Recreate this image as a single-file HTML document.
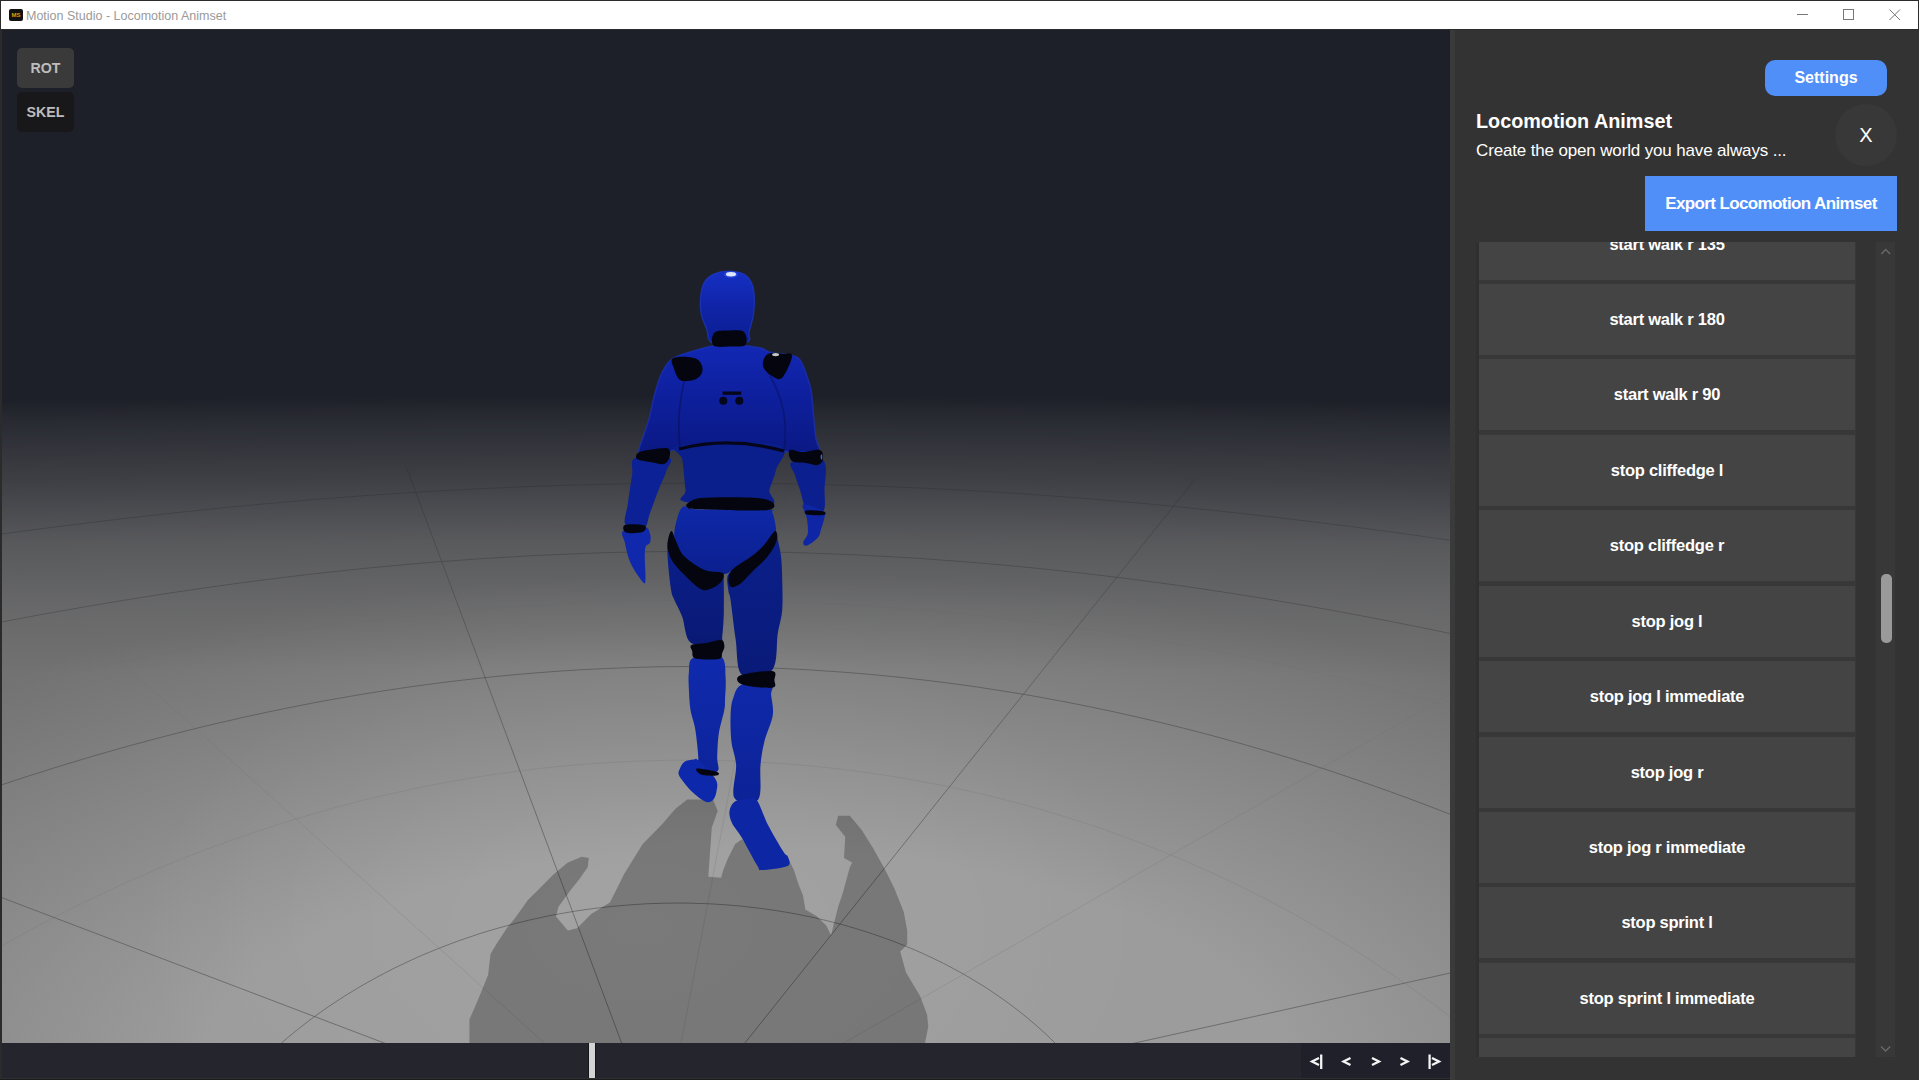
<!DOCTYPE html>
<html><head><meta charset="utf-8">
<style>
*{margin:0;padding:0;box-sizing:border-box}
html,body{width:1919px;height:1080px;overflow:hidden;background:#2b2b2b;font-family:"Liberation Sans",sans-serif}
.abs{position:absolute}
#title{left:1px;top:1px;width:1917px;height:28px;background:#fff}
#ttxt{left:26px;top:9px;font-size:12.5px;color:#9a9a9a;white-space:nowrap}
#ico{left:9px;top:9px;width:14px;height:12px;background:#111;border-radius:2px;color:#d9a400;font-size:6px;font-weight:bold;text-align:center;line-height:12px}
#scene{left:2px;top:30px;width:1448px;height:1013px;background:#1e2029;overflow:hidden}
#panel{left:1450px;top:30px;width:469px;height:1050px;background:#333}
#pstrip{left:1450px;top:30px;width:5px;height:1050px;background:#3b3a3b}
#tl{left:2px;top:1043px;width:1448px;height:35px;background:#25262d}
#tlc{left:1301px;top:1043px;width:149px;height:35px;background:#1f2029}
#ph{left:588px;top:1043px;width:8px;height:35px;background:#d4d4d4;border-left:1px solid #15161b;border-right:1px solid #15161b}
#bline{left:2px;top:1078px;width:1448px;height:1px;background:#2e2f33}
#bline2{left:0px;top:1079px;width:1450px;height:1px;background:#1c1c1c}
#list{left:1476px;top:242px;width:380px;height:815px;overflow:hidden;background:#383838}
.item{position:absolute;left:3px;width:376px;height:71px;background:#444;color:#fff;font-weight:bold;font-size:16.5px;text-align:center;line-height:71px;white-space:nowrap;letter-spacing:-0.25px}
#track{left:1876px;top:242px;width:19px;height:815px;background:#383838}
#thumb{left:1881px;top:574px;width:10.5px;height:69px;background:#9a9a9a;border-radius:5px}
.btn{position:absolute;color:#fff;font-weight:bold;text-align:center;white-space:nowrap}
#settings{left:1765px;top:60px;width:122px;height:36px;background:#4f8ff7;border-radius:10px;font-size:16px;line-height:36px}
#export{left:1645px;top:176px;width:252px;height:55px;background:#4f8ff7;font-size:17px;line-height:55px;letter-spacing:-0.62px}
#ptitle{left:1476px;top:110px;font-size:19.8px;font-weight:bold;color:#fff;white-space:nowrap}
#psub{left:1476px;top:141px;font-size:17px;letter-spacing:-0.15px;color:#fff;white-space:nowrap}
#xc{left:1835px;top:104px;width:62px;height:62px;border-radius:50%;background:#383838;color:#fff;font-size:20px;text-align:center;line-height:62px}
.vbtn{position:absolute;left:17px;width:57px;height:40px;border-radius:5px;font-size:14.2px;font-weight:bold;color:#bdbdbd;text-align:center;line-height:40px}
.tc{position:absolute;top:1050px;color:#fff;font-size:17px;font-weight:bold}
</style></head><body>
<div id="title" class="abs"></div>
<div id="ico" class="abs">MS</div>
<div id="ttxt" class="abs">Motion Studio - Locomotion Animset</div>
<svg class="abs" style="left:1780px;top:0px" width="139" height="29" viewBox="1780 0 139 29">
<line x1="1797" y1="14.5" x2="1808" y2="14.5" stroke="#777" stroke-width="1"/>
<rect x="1843.5" y="9.5" width="10" height="10" fill="none" stroke="#777" stroke-width="1"/>
<path d="M1889.5 9.5 L1900 20 M1900 9.5 L1889.5 20" stroke="#777" stroke-width="1"/>
</svg>
<svg class="abs" style="left:2px;top:30px" width="1448" height="1013" viewBox="2 30 1448 1013">
<defs>
<radialGradient id="floorg" gradientUnits="userSpaceOnUse" cx="744" cy="1078" r="1211" gradientTransform="translate(744 1078) scale(1 0.418) translate(-744 -1078)">
<stop offset="0" stop-color="#9c9c9c"/>
<stop offset="0.45" stop-color="#9c9c9c"/>
<stop offset="1" stop-color="#727272"/>
</radialGradient>
<linearGradient id="topg" x1="0" y1="0" x2="0" y2="1"><stop offset="0" stop-color="#262730" stop-opacity="1"/><stop offset="1" stop-color="#1e2029" stop-opacity="0"/></linearGradient>
<radialGradient id="spot" gradientUnits="userSpaceOnUse" cx="640" cy="930" r="520" gradientTransform="translate(640 930) scale(1 0.6) translate(-640 -930)">
<stop offset="0" stop-color="#ffffff" stop-opacity="0.07"/>
<stop offset="0.6" stop-color="#ffffff" stop-opacity="0.03"/>
<stop offset="1" stop-color="#ffffff" stop-opacity="0"/>
</radialGradient>
<radialGradient id="fog" gradientUnits="userSpaceOnUse" cx="661" cy="1148" r="800" gradientTransform="translate(661 1148) scale(8 1) translate(-661 -1148)">
<stop offset="0.5" stop-color="#1e2029" stop-opacity="0"/>
<stop offset="0.6" stop-color="#1e2029" stop-opacity="0"/>
<stop offset="0.68" stop-color="#1e2029" stop-opacity="0.12"/>
<stop offset="0.76" stop-color="#1e2029" stop-opacity="0.30"/>
<stop offset="0.84" stop-color="#1e2029" stop-opacity="0.62"/>
<stop offset="0.88" stop-color="#1e2029" stop-opacity="0.75"/>
<stop offset="0.92" stop-color="#1e2029" stop-opacity="0.90"/>
<stop offset="0.94" stop-color="#1e2029" stop-opacity="1"/>
</radialGradient>
<style>
.gd{fill:none;stroke:#4a4a4a;stroke-opacity:0.55;stroke-width:1.1}
.gf{fill:none;stroke:#606060;stroke-opacity:0.3;stroke-width:1}
</style>
</defs>
<rect x="2" y="30" width="1448" height="1013" fill="#1e2029"/>
<rect x="2" y="30" width="1448" height="160" fill="url(#topg)"/>
<rect x="2" y="200" width="1448" height="843" fill="url(#floorg)"/>
<rect x="2" y="200" width="1448" height="843" fill="url(#spot)"/>
<g><path d="M151.1 1298.2 L151.4 1291.0 L151.8 1283.9 L152.4 1276.8 L153.2 1269.7 L154.1 1262.7 L155.2 1255.8 L156.4 1248.9 L157.8 1242.1 L159.4 1235.3 L161.1 1228.6 L162.9 1221.9 L164.9 1215.3 L167.0 1208.8 L169.2 1202.4 L171.6 1196.0 L174.1 1189.7 L176.7 1183.4 L179.4 1177.2 L182.3 1171.1 L185.2 1165.0 L188.3 1159.1 L191.5 1153.2 L194.8 1147.3 L198.1 1141.6 L201.6 1135.9 L205.2 1130.3 L208.9 1124.7 L212.6 1119.3 L216.5 1113.9 L220.4 1108.6 L224.4 1103.3 L228.5 1098.1 L232.6 1093.1 L236.9 1088.0 L241.2 1083.1 L245.6 1078.2 L250.0 1073.4 L254.5 1068.7 L259.1 1064.0 L263.7 1059.5 L268.4 1055.0 L273.2 1050.5 L278.0 1046.2 L282.8 1041.9 L287.7 1037.7 L292.7 1033.5 L297.7 1029.5 L302.8 1025.5 L307.9 1021.5 L313.0 1017.7 L318.2 1013.9 L323.4 1010.2 L328.7 1006.5 L334.0 1003.0 L339.3 999.5 L344.7 996.0 L350.1 992.7 L355.6 989.4 L361.0 986.1 L366.5 983.0 L372.1 979.9 L377.6 976.8 L383.2 973.9 L388.8 971.0 L394.4 968.1 L400.1 965.4 L405.8 962.7 L411.5 960.0 L417.2 957.4 L422.9 954.9 L428.7 952.5 L434.5 950.1 L440.3 947.8 L446.1 945.5 L451.9 943.3 L457.7 941.2 L463.6 939.1 L469.5 937.1 L475.4 935.1 L481.2 933.2 L487.2 931.4 L493.1 929.6 L499.0 927.9 L504.9 926.3 L510.9 924.7 L516.8 923.1 L522.8 921.7 L528.8 920.2 L534.7 918.9 L540.7 917.6 L546.7 916.3 L552.7 915.1 L558.7 914.0 L564.7 912.9 L570.7 911.9 L576.7 910.9 L582.7 910.0 L588.7 909.2 L594.7 908.4 L600.8 907.7 L606.8 907.0 L612.8 906.3 L618.8 905.8 L624.8 905.3 L630.8 904.8 L636.9 904.4 L642.9 904.0 L648.9 903.7 L654.9 903.5 L660.9 903.3 L666.9 903.2 L672.9 903.1 L678.9 903.1 L684.9 903.1 L690.9 903.2 L696.9 903.4 L702.9 903.6 L708.9 903.8 L714.9 904.1 L720.8 904.5 L726.8 904.9 L732.7 905.4 L738.7 905.9 L744.6 906.5 L750.5 907.2 L756.5 907.9 L762.4 908.6 L768.3 909.4 L774.2 910.3 L780.0 911.2 L785.9 912.2 L791.8 913.2 L797.6 914.3 L803.5 915.5 L809.3 916.7 L815.1 917.9 L820.9 919.3 L826.7 920.6 L832.4 922.1 L838.2 923.6 L843.9 925.1 L849.6 926.7 L855.3 928.4 L861.0 930.2 L866.7 931.9 L872.3 933.8 L877.9 935.7 L883.5 937.7 L889.1 939.7 L894.7 941.8 L900.2 944.0 L905.7 946.2 L911.2 948.5 L916.7 950.8 L922.1 953.2 L927.5 955.7 L932.9 958.2 L938.2 960.8 L943.6 963.4 L948.9 966.2 L954.1 969.0 L959.3 971.8 L964.5 974.7 L969.7 977.7 L974.8 980.8 L979.9 983.9 L985.0 987.1 L990.0 990.3 L994.9 993.6 L999.8 997.0 L1004.7 1000.5 L1009.6 1004.0 L1014.4 1007.6 L1019.1 1011.3 L1023.8 1015.0 L1028.4 1018.8 L1033.0 1022.7 L1037.6 1026.6 L1042.0 1030.6 L1046.5 1034.7 L1050.8 1038.9 L1055.1 1043.1 L1059.4 1047.4 L1063.6 1051.8 L1067.7 1056.3 L1071.7 1060.8 L1075.7 1065.4 L1079.6 1070.1 L1083.4 1074.8 L1087.2 1079.6 L1090.8 1084.5 L1094.4 1089.5 L1097.9 1094.5 L1101.4 1099.7 L1104.7 1104.8 L1108.0 1110.1 L1111.1 1115.5 L1114.2 1120.9 L1117.1 1126.4 L1120.0 1131.9 L1122.7 1137.5 L1125.4 1143.3 L1127.9 1149.0 L1130.4 1154.9 L1132.7 1160.8 L1134.9 1166.8 L1137.0 1172.9 L1138.9 1179.0 L1140.8 1185.2 L1142.5 1191.5 L1144.0 1197.8 L1145.5 1204.2 L1146.8 1210.7 L1147.9 1217.3 L1148.9 1223.9 L1149.8 1230.5 L1150.5 1237.3 L1151.0 1244.1 L1151.4 1250.9 L1151.7 1257.8 L1151.7 1264.8 L1151.6 1271.8 L1151.4 1278.8 L1150.9 1286.0 L1150.3 1293.1 L1149.9 1296.7" fill="none" stroke="#505050" stroke-opacity="0.6" stroke-width="1"/>
<path d="M-196.4 1082.0 L-184.2 1072.2 L-172.0 1062.6 L-159.9 1053.2 L-147.8 1044.1 L-135.7 1035.2 L-123.7 1026.5 L-111.7 1018.0 L-99.8 1009.8 L-87.9 1001.7 L-76.1 993.8 L-64.4 986.2 L-52.6 978.7 L-41.0 971.4 L-29.3 964.3 L-17.8 957.4 L-6.2 950.6 L5.2 944.0 L16.7 937.6 L28.1 931.3 L39.4 925.2 L50.7 919.3 L61.9 913.5 L73.1 907.8 L84.2 902.3 L95.3 896.9 L106.4 891.7 L117.4 886.6 L128.3 881.6 L139.2 876.8 L150.1 872.1 L160.9 867.5 L171.7 863.1 L182.4 858.7 L193.1 854.5 L203.7 850.4 L214.3 846.4 L224.9 842.6 L235.4 838.8 L245.9 835.1 L256.4 831.6 L266.8 828.1 L277.1 824.8 L287.5 821.5 L297.8 818.4 L308.1 815.3 L318.3 812.4 L328.5 809.5 L338.7 806.7 L348.8 804.0 L358.9 801.4 L369.0 798.9 L379.0 796.5 L389.0 794.2 L399.0 792.0 L409.0 789.8 L418.9 787.7 L428.8 785.7 L438.7 783.8 L448.6 782.0 L458.4 780.2 L468.2 778.5 L478.0 776.9 L487.8 775.4 L497.5 774.0 L507.3 772.6 L517.0 771.3 L526.7 770.1 L536.4 768.9 L546.0 767.8 L555.7 766.8 L565.3 765.9 L574.9 765.0 L584.5 764.2 L594.1 763.5 L603.7 762.9 L613.2 762.3 L622.8 761.8 L632.3 761.3 L641.9 761.0 L651.4 760.7 L660.9 760.4 L670.4 760.3 L679.9 760.2 L689.4 760.2 L698.9 760.2 L708.4 760.3 L717.9 760.5 L727.4 760.8 L736.9 761.1 L746.4 761.5 L755.9 761.9 L765.3 762.5 L774.8 763.1 L784.3 763.7 L793.8 764.5 L803.3 765.3 L812.8 766.2 L822.3 767.1 L831.8 768.1 L841.3 769.2 L850.8 770.4 L860.4 771.7 L869.9 773.0 L879.4 774.4 L889.0 775.8 L898.5 777.4 L908.1 779.0 L917.7 780.7 L927.3 782.5 L936.9 784.4 L946.5 786.3 L956.2 788.3 L965.8 790.4 L975.5 792.6 L985.1 794.9 L994.8 797.2 L1004.6 799.7 L1014.3 802.2 L1024.0 804.8 L1033.8 807.5 L1043.6 810.3 L1053.4 813.2 L1063.2 816.2 L1073.1 819.3 L1082.9 822.5 L1092.8 825.7 L1102.7 829.1 L1112.7 832.6 L1122.6 836.2 L1132.6 839.9 L1142.6 843.7 L1152.6 847.6 L1162.7 851.6 L1172.8 855.8 L1182.9 860.0 L1193.0 864.4 L1203.2 868.9 L1213.4 873.5 L1223.6 878.2 L1233.8 883.1 L1244.1 888.1 L1254.4 893.2 L1264.7 898.5 L1275.0 903.9 L1285.4 909.4 L1295.8 915.1 L1306.3 921.0 L1316.7 927.0 L1327.2 933.1 L1337.7 939.5 L1348.2 945.9 L1358.8 952.6 L1369.4 959.4 L1380.0 966.4 L1390.6 973.5 L1401.3 980.9 L1412.0 988.4 L1422.7 996.1 L1433.4 1004.0 L1444.2 1012.2 L1454.9 1020.5 L1465.7 1029.0 L1476.5 1037.8 L1487.3 1046.7 L1498.2 1055.9 L1509.0 1065.4 L1519.8 1075.0 L1530.7 1084.9 L1541.6 1095.1 L1552.4 1105.5 L1563.3 1116.2 L1574.1 1127.2 L1585.0 1138.4 L1595.8 1149.9 L1606.6 1161.7 L1617.4 1173.8 L1628.2 1186.2 L1639.0 1198.9 L1649.7 1212.0 L1660.4 1225.3 L1671.0 1239.0 L1681.6 1253.1 L1692.1 1267.5 L1697.3 1274.8" fill="none" stroke="#707070" stroke-opacity="0.26" stroke-width="1"/>
<path d="M-198.3 860.6 L-180.5 853.1 L-162.9 845.9 L-145.6 838.9 L-128.5 832.2 L-111.6 825.6 L-94.9 819.2 L-78.4 813.1 L-62.1 807.1 L-46.0 801.3 L-30.0 795.7 L-14.2 790.2 L1.4 784.9 L16.8 779.8 L32.1 774.9 L47.3 770.1 L62.2 765.4 L77.1 760.9 L91.8 756.5 L106.4 752.3 L120.8 748.2 L135.2 744.2 L149.4 740.4 L163.5 736.7 L177.4 733.1 L191.3 729.6 L205.1 726.2 L218.7 723.0 L232.3 719.9 L245.7 716.8 L259.1 713.9 L272.4 711.1 L285.6 708.4 L298.7 705.8 L311.8 703.2 L324.7 700.8 L337.6 698.5 L350.4 696.3 L363.2 694.1 L375.8 692.1 L388.5 690.1 L401.0 688.2 L413.5 686.4 L426.0 684.7 L438.4 683.1 L450.7 681.5 L463.0 680.1 L475.3 678.7 L487.5 677.4 L499.6 676.1 L511.7 675.0 L523.8 673.9 L535.9 672.9 L547.9 672.0 L559.9 671.1 L571.9 670.3 L583.8 669.6 L595.7 669.0 L607.6 668.5 L619.5 668.0 L631.3 667.5 L643.2 667.2 L655.0 666.9 L666.8 666.7 L678.6 666.6 L690.4 666.5 L702.2 666.5 L714.0 666.6 L725.8 666.8 L737.6 667.0 L749.4 667.3 L761.2 667.7 L773.0 668.1 L784.8 668.6 L796.6 669.2 L808.4 669.8 L820.3 670.6 L832.1 671.4 L844.0 672.2 L855.9 673.2 L867.8 674.2 L879.8 675.3 L891.7 676.5 L903.7 677.7 L915.8 679.1 L927.8 680.5 L939.9 682.0 L952.1 683.5 L964.2 685.2 L976.5 686.9 L988.7 688.8 L1001.0 690.7 L1013.4 692.7 L1025.8 694.7 L1038.3 696.9 L1050.8 699.2 L1063.4 701.5 L1076.0 704.0 L1088.7 706.5 L1101.5 709.2 L1114.3 711.9 L1127.2 714.8 L1140.2 717.7 L1153.3 720.8 L1166.4 723.9 L1179.7 727.2 L1193.0 730.6 L1206.4 734.1 L1219.9 737.7 L1233.5 741.5 L1247.2 745.4 L1261.0 749.4 L1274.9 753.5 L1288.9 757.8 L1303.1 762.2 L1317.3 766.7 L1331.7 771.4 L1346.2 776.3 L1360.8 781.3 L1375.6 786.5 L1390.5 791.8 L1405.6 797.3 L1420.8 803.0 L1436.1 808.8 L1451.7 814.8 L1467.4 821.1 L1483.2 827.5 L1499.2 834.1 L1515.5 841.0 L1531.9 848.0 L1548.5 855.3 L1565.3 862.8 L1582.3 870.6 L1599.5 878.6 L1617.0 886.8 L1634.7 895.3 L1652.6 904.1 L1670.7 913.2 L1689.2 922.6 L1698.5 927.4" fill="none" stroke="#505050" stroke-opacity="0.65" stroke-width="1"/>
<path d="M-198.2 742.9 L-177.4 736.7 L-157.1 730.8 L-137.0 725.1 L-117.3 719.6 L-97.8 714.3 L-78.6 709.1 L-59.7 704.1 L-41.1 699.3 L-22.7 694.7 L-4.6 690.2 L13.3 685.9 L31.0 681.7 L48.5 677.6 L65.7 673.7 L82.8 670.0 L99.7 666.3 L116.4 662.8 L132.9 659.4 L149.2 656.2 L165.4 653.0 L181.4 650.0 L197.3 647.1 L213.0 644.3 L228.6 641.6 L244.0 639.0 L259.3 636.5 L274.5 634.1 L289.6 631.8 L304.6 629.5 L319.4 627.4 L334.2 625.4 L348.8 623.5 L363.4 621.6 L377.9 619.8 L392.2 618.2 L406.5 616.6 L420.8 615.1 L434.9 613.6 L449.0 612.3 L463.0 611.0 L476.9 609.8 L490.8 608.7 L504.7 607.6 L518.5 606.6 L532.2 605.7 L545.9 604.9 L559.5 604.2 L573.1 603.5 L586.7 602.9 L600.3 602.3 L613.8 601.8 L627.3 601.4 L640.7 601.1 L654.2 600.8 L667.6 600.6 L681.1 600.5 L694.5 600.4 L707.9 600.5 L721.3 600.5 L734.7 600.7 L748.1 600.9 L761.5 601.2 L775.0 601.5 L788.4 602.0 L801.8 602.5 L815.3 603.0 L828.8 603.7 L842.3 604.4 L855.9 605.1 L869.5 606.0 L883.1 606.9 L896.8 607.9 L910.5 609.0 L924.2 610.1 L938.0 611.4 L951.8 612.7 L965.8 614.0 L979.7 615.5 L993.7 617.0 L1007.8 618.7 L1022.0 620.4 L1036.3 622.1 L1050.6 624.0 L1065.0 626.0 L1079.5 628.0 L1094.1 630.2 L1108.8 632.4 L1123.5 634.8 L1138.4 637.2 L1153.4 639.7 L1168.5 642.3 L1183.8 645.1 L1199.2 647.9 L1214.6 650.9 L1230.3 653.9 L1246.1 657.1 L1262.0 660.4 L1278.1 663.8 L1294.3 667.4 L1310.7 671.1 L1327.3 674.9 L1344.1 678.8 L1361.0 682.9 L1378.2 687.1 L1395.6 691.5 L1413.1 696.0 L1430.9 700.7 L1449.0 705.6 L1467.2 710.6 L1485.8 715.8 L1504.6 721.2 L1523.6 726.8 L1543.0 732.5 L1562.6 738.5 L1582.6 744.7 L1602.8 751.1 L1623.4 757.8 L1644.4 764.6 L1665.7 771.8 L1687.4 779.1 L1698.4 782.9" fill="none" stroke="#707070" stroke-opacity="0.26" stroke-width="1"/>
<path d="M-199.9 665.0 L-177.2 659.8 L-154.9 654.7 L-133.0 649.8 L-111.5 645.1 L-90.3 640.6 L-69.5 636.2 L-48.9 632.0 L-28.7 628.0 L-8.8 624.0 L10.8 620.3 L30.2 616.6 L49.3 613.1 L68.1 609.8 L86.7 606.5 L105.1 603.4 L123.3 600.4 L141.2 597.5 L158.9 594.7 L176.5 592.0 L193.9 589.5 L211.1 587.0 L228.1 584.6 L244.9 582.4 L261.6 580.2 L278.2 578.1 L294.6 576.1 L310.9 574.2 L327.1 572.4 L343.1 570.7 L359.0 569.0 L374.8 567.4 L390.5 566.0 L406.1 564.5 L421.6 563.2 L437.0 561.9 L452.4 560.8 L467.6 559.7 L482.8 558.6 L497.9 557.7 L513.0 556.8 L528.0 555.9 L542.9 555.2 L557.8 554.5 L572.6 553.9 L587.4 553.3 L602.2 552.8 L616.9 552.4 L631.6 552.1 L646.3 551.8 L660.9 551.6 L675.6 551.4 L690.2 551.3 L704.8 551.3 L719.4 551.3 L734.0 551.5 L748.6 551.6 L763.3 551.9 L777.9 552.2 L792.5 552.5 L807.2 553.0 L821.9 553.5 L836.6 554.1 L851.4 554.7 L866.2 555.4 L881.0 556.2 L895.9 557.0 L910.9 557.9 L925.9 558.9 L940.9 560.0 L956.0 561.1 L971.2 562.3 L986.5 563.6 L1001.8 564.9 L1017.3 566.4 L1032.8 567.9 L1048.4 569.5 L1064.1 571.2 L1079.9 572.9 L1095.9 574.8 L1111.9 576.7 L1128.1 578.7 L1144.4 580.8 L1160.8 583.0 L1177.4 585.3 L1194.2 587.7 L1211.1 590.2 L1228.1 592.8 L1245.3 595.5 L1262.8 598.3 L1280.4 601.3 L1298.2 604.3 L1316.2 607.5 L1334.4 610.7 L1352.8 614.2 L1371.5 617.7 L1390.4 621.4 L1409.6 625.2 L1429.0 629.1 L1448.8 633.2 L1468.8 637.5 L1489.1 641.9 L1509.7 646.5 L1530.7 651.3 L1552.0 656.2 L1573.7 661.3 L1595.8 666.6 L1618.3 672.1 L1641.2 677.9 L1664.5 683.8 L1688.3 690.0 L1688.3 690.0" fill="none" stroke="#505050" stroke-opacity="0.65" stroke-width="1"/>
<path d="M-199.7 608.0 L-175.6 603.4 L-151.9 599.0 L-128.7 594.7 L-105.9 590.6 L-83.5 586.7 L-61.4 582.9 L-39.7 579.2 L-18.4 575.7 L2.6 572.3 L23.3 569.1 L43.7 565.9 L63.8 562.9 L83.7 560.1 L103.2 557.3 L122.6 554.6 L141.7 552.0 L160.5 549.6 L179.2 547.2 L197.6 545.0 L215.8 542.8 L233.9 540.7 L251.8 538.7 L269.5 536.8 L287.0 535.0 L304.4 533.3 L321.6 531.7 L338.7 530.1 L355.7 528.6 L372.5 527.2 L389.2 525.8 L405.8 524.6 L422.3 523.4 L438.7 522.3 L455.0 521.2 L471.2 520.2 L487.3 519.3 L503.4 518.5 L519.4 517.7 L535.3 517.0 L551.1 516.3 L566.9 515.8 L582.7 515.2 L598.4 514.8 L614.1 514.4 L629.7 514.1 L645.3 513.8 L660.9 513.6 L676.5 513.4 L692.0 513.4 L707.6 513.3 L723.1 513.4 L738.7 513.5 L754.2 513.6 L769.8 513.9 L785.3 514.2 L800.9 514.5 L816.6 514.9 L832.2 515.4 L847.9 515.9 L863.7 516.5 L879.4 517.2 L895.3 517.9 L911.2 518.7 L927.1 519.6 L943.1 520.5 L959.2 521.5 L975.4 522.6 L991.7 523.7 L1008.0 524.9 L1024.5 526.2 L1041.0 527.6 L1057.7 529.0 L1074.5 530.5 L1091.4 532.1 L1108.4 533.8 L1125.6 535.5 L1142.9 537.4 L1160.4 539.3 L1178.1 541.3 L1195.9 543.4 L1213.9 545.6 L1232.0 547.9 L1250.4 550.3 L1269.0 552.8 L1287.8 555.4 L1306.8 558.1 L1326.1 560.9 L1345.6 563.8 L1365.4 566.9 L1385.4 570.0 L1405.7 573.3 L1426.4 576.7 L1447.3 580.3 L1468.6 584.0 L1490.2 587.8 L1512.2 591.8 L1534.5 595.9 L1557.3 600.3 L1580.4 604.7 L1604.0 609.4 L1628.0 614.2 L1652.6 619.3 L1677.6 624.5 L1690.3 627.2" fill="none" stroke="#707070" stroke-opacity="0.06" stroke-width="1"/>
<path d="M-189.8 562.7 L-164.8 558.7 L-140.3 554.8 L-116.2 551.1 L-92.6 547.5 L-69.4 544.1 L-46.6 540.7 L-24.2 537.6 L-2.1 534.5 L19.6 531.6 L41.0 528.8 L62.1 526.1 L82.9 523.5 L103.4 521.0 L123.6 518.6 L143.6 516.3 L163.3 514.1 L182.8 512.0 L202.0 510.0 L221.1 508.0 L239.9 506.2 L258.6 504.4 L277.0 502.8 L295.3 501.2 L313.5 499.6 L331.4 498.2 L349.2 496.8 L366.9 495.5 L384.5 494.3 L401.9 493.1 L419.2 492.1 L436.4 491.0 L453.5 490.1 L470.4 489.2 L487.3 488.4 L504.2 487.6 L520.9 486.9 L537.6 486.2 L554.2 485.7 L570.7 485.1 L587.2 484.7 L603.6 484.3 L620.0 483.9 L636.4 483.7 L652.8 483.4 L669.1 483.3 L685.4 483.2 L701.7 483.1 L717.9 483.1 L734.2 483.2 L750.5 483.3 L766.8 483.5 L783.1 483.7 L799.5 484.0 L815.8 484.4 L832.2 484.8 L848.7 485.3 L865.1 485.8 L881.7 486.4 L898.3 487.1 L914.9 487.8 L931.7 488.6 L948.5 489.4 L965.4 490.3 L982.3 491.3 L999.4 492.4 L1016.6 493.5 L1033.9 494.7 L1051.3 495.9 L1068.8 497.2 L1086.5 498.6 L1104.3 500.1 L1122.2 501.6 L1140.4 503.2 L1158.6 504.9 L1177.1 506.7 L1195.7 508.6 L1214.6 510.5 L1233.6 512.6 L1252.9 514.7 L1272.3 516.9 L1292.1 519.3 L1312.0 521.7 L1332.3 524.2 L1352.8 526.8 L1373.5 529.6 L1394.6 532.4 L1416.0 535.4 L1437.8 538.5 L1459.9 541.7 L1482.3 545.0 L1505.2 548.5 L1528.4 552.2 L1552.1 555.9 L1576.2 559.9 L1600.8 563.9 L1625.8 568.2 L1651.4 572.6 L1677.5 577.2 L1690.8 579.6" fill="none" stroke="#505050" stroke-opacity="0.6" stroke-width="1"/>
<path d="M660.9 1148.2 L-731.4 618.9" fill="none" stroke="#505050" stroke-opacity="0.62" stroke-width="1"/>
<path d="M660.9 1148.2 L-47.8 509.2" fill="none" stroke="#707070" stroke-opacity="0.26" stroke-width="1"/>
<path d="M660.9 1148.2 L406.4 467.1" fill="none" stroke="#505050" stroke-opacity="0.62" stroke-width="1"/>
<path d="M660.9 1148.2 L792.8 459.2" fill="none" stroke="#707070" stroke-opacity="0.26" stroke-width="1"/>
<path d="M660.9 1148.2 L1194.1 480.4" fill="none" stroke="#505050" stroke-opacity="0.62" stroke-width="1"/>
<path d="M660.9 1148.2 L1709.5 545.1" fill="none" stroke="#707070" stroke-opacity="0.26" stroke-width="1"/>
<path d="M660.9 1148.2 L2602.6 717.2" fill="none" stroke="#505050" stroke-opacity="0.62" stroke-width="1"/>
<path d="M660.9 1148.2 L4989.3 1416.6" fill="none" stroke="#707070" stroke-opacity="0.26" stroke-width="1"/>
<path d="M660.9 1148.2 L4966.2 2784.8" fill="none" stroke="#505050" stroke-opacity="0.62" stroke-width="1"/>
<path d="M660.9 1148.2 L2698.2 2984.8" fill="none" stroke="#707070" stroke-opacity="0.26" stroke-width="1"/>
<path d="M660.9 1148.2 L1344.3 2976.7" fill="none" stroke="#505050" stroke-opacity="0.62" stroke-width="1"/>
<path d="M660.9 1148.2 L309.1 2986.6" fill="none" stroke="#707070" stroke-opacity="0.26" stroke-width="1"/>
<path d="M660.9 1148.2 L-790.2 2965.4" fill="none" stroke="#505050" stroke-opacity="0.62" stroke-width="1"/>
<path d="M660.9 1148.2 L-2535.9 2986.9" fill="none" stroke="#707070" stroke-opacity="0.26" stroke-width="1"/>
<path d="M660.9 1148.2 L-2977.2 1955.7" fill="none" stroke="#505050" stroke-opacity="0.62" stroke-width="1"/>
<path d="M660.9 1148.2 L-2309.6 964.0" fill="none" stroke="#707070" stroke-opacity="0.26" stroke-width="1"/></g>
<path d="M469.4 1043.0 L469.4 1019.6 L477.6 1000.8 L488.1 975.1 L490.5 954.0 L497.5 942.3 L506.8 928.2 L516.2 916.5 L527.9 900.1 L537.3 890.7 L553.7 874.3 L567.8 862.6 L581.8 856.8 L588.8 857.9 L587.7 867.3 L579.5 879.0 L570.1 890.7 L558.4 907.1 L556.0 916.5 L567.8 930.5 L577.1 928.2 L591.2 914.1 L609.9 902.4 L619.3 883.7 L624.0 874.3 L642.7 843.9 L661.4 825.1 L675.5 808.7 L687.2 799.4 L713.0 799.4 L717.7 811.1 L711.8 827.5 L708.3 876.7 L721.1 877.8 L723.4 869.6 L728.1 857.9 L735.1 843.9 L742.1 839.2 L751.5 848.5 L770.0 850.0 L789.0 860.2 L793.7 869.6 L798.3 883.7 L803.0 895.4 L805.4 909.4 L817.1 916.4 L826.4 925.8 L831.1 935.2 L834.6 921.1 L838.1 907.1 L842.8 893.0 L849.8 867.3 L852.2 862.6 L844.0 857.9 L845.2 836.8 L835.8 825.1 L838.1 815.8 L849.8 815.8 L861.6 829.8 L873.3 848.5 L885.0 869.6 L894.3 888.3 L903.7 911.8 L907.2 930.5 L907.2 944.5 L900.2 951.6 L906.0 972.6 L920.1 996.0 L927.1 1014.8 L928.3 1026.5 L925.0 1043.0 Z" fill="#000" fill-opacity="0.25"/>
<rect x="2" y="30" width="1448" height="1013" fill="url(#fog)"/>
<defs><linearGradient id="gHead" x1="0" y1="0" x2="0" y2="1"><stop offset="0" stop-color="#1630c4"/><stop offset="0.5" stop-color="#0f23a6"/><stop offset="1" stop-color="#0c1e94"/></linearGradient>
<linearGradient id="gUp" gradientUnits="userSpaceOnUse" x1="0" y1="345" x2="0" y2="452"><stop offset="0" stop-color="#1228b4"/><stop offset="0.5" stop-color="#0e1f9c"/><stop offset="1" stop-color="#0b1984"/></linearGradient>
<linearGradient id="gPel" gradientUnits="userSpaceOnUse" x1="0" y1="507" x2="0" y2="575"><stop offset="0" stop-color="#0e28a8"/><stop offset="1" stop-color="#0b1f8e"/></linearGradient>
<linearGradient id="gLeg" gradientUnits="userSpaceOnUse" x1="0" y1="540" x2="0" y2="680"><stop offset="0" stop-color="#0b1f8c"/><stop offset="1" stop-color="#08176c"/></linearGradient>
<linearGradient id="gLegR" gradientUnits="userSpaceOnUse" x1="0" y1="540" x2="0" y2="680"><stop offset="0" stop-color="#0b1f8a"/><stop offset="1" stop-color="#091a78"/></linearGradient>
<linearGradient id="gShin" gradientUnits="userSpaceOnUse" x1="0" y1="655" x2="0" y2="800"><stop offset="0" stop-color="#0f2aae"/><stop offset="1" stop-color="#0c2296"/></linearGradient></defs>
<path d="M672.2 358.9 C677.5 355.2 686.7 353.2 693.3 351.1 C699.9 349.0 705.7 347.1 712.0 346.0 C718.3 344.9 723.1 344.1 731.1 344.4 C739.1 344.7 753.5 346.5 760.0 347.8 C766.5 349.1 764.6 350.9 770.0 352.2 C775.4 353.5 787.2 354.3 792.2 355.6 C797.2 356.9 797.9 357.5 800.0 360.0 C802.1 362.5 803.2 365.7 805.0 370.7 C806.8 375.7 809.6 382.8 811.0 390.0 C812.4 397.2 812.6 406.0 813.4 414.0 C814.2 422.0 814.8 431.7 815.8 438.1 C816.8 444.5 821.2 450.3 819.4 452.6 C817.6 454.9 809.8 452.1 805.0 452.0 C800.2 451.9 794.1 452.2 790.5 452.0 C786.9 451.8 793.3 452.7 783.3 451.0 C773.3 449.3 747.8 442.3 730.4 442.0 C713.0 441.7 688.8 447.5 678.6 449.0 C668.4 450.5 673.8 450.5 669.0 451.0 C664.2 451.5 655.0 451.8 650.0 452.0 C645.0 452.2 639.9 454.7 638.9 452.0 C637.9 449.3 641.9 441.6 643.7 435.7 C645.5 429.8 647.9 423.3 649.7 416.5 C651.5 409.7 652.5 402.0 654.5 394.8 C656.5 387.6 658.8 379.1 661.8 373.1 C664.8 367.1 667.0 362.6 672.2 358.9 Z" fill="url(#gUp)" stroke="#1a35c8" stroke-width="1.6" stroke-opacity="0.55"/>
<path d="M680.0 445.0 C695.9 442.5 762.0 440.8 778.0 445.0 C794.0 449.2 777.4 462.5 776.0 470.0 C774.6 477.5 770.7 484.1 769.4 490.0 C768.1 495.9 782.1 503.6 768.3 505.6 C754.5 507.6 700.5 504.8 686.7 502.2 C672.9 499.6 686.2 497.0 685.5 490.0 C684.8 483.0 683.4 467.5 682.5 460.0 C681.6 452.5 664.1 447.5 680.0 445.0 Z" fill="#0b1f8c" />
<path d="M635.2 458.1 C641.4 455.3 664.0 455.2 669.2 457.4 C674.4 459.6 667.9 466.1 666.2 471.4 C664.5 476.7 661.5 482.3 658.8 489.2 C656.1 496.1 652.5 506.5 650.0 512.9 C647.5 519.3 648.1 525.7 644.0 527.7 C639.9 529.7 628.2 528.7 625.5 524.7 C622.8 520.8 626.7 512.4 627.8 504.0 C628.9 495.6 631.0 482.0 632.2 474.4 C633.4 466.8 629.0 460.9 635.2 458.1 Z" fill="#0c2196" />
<path d="M792.0 462.0 C796.7 459.5 817.6 455.3 823.0 460.0 C828.4 464.7 824.5 481.5 824.5 490.0 C824.5 498.5 826.1 507.3 823.3 511.0 C820.5 514.7 811.7 515.5 807.8 512.0 C803.9 508.5 802.1 496.2 800.0 490.0 C797.9 483.8 796.3 479.7 795.0 475.0 C793.7 470.3 787.3 464.5 792.0 462.0 Z" fill="#0b1f8e" />
<path d="M623.3 530.7 C626.6 528.1 640.3 526.4 644.8 526.9 C649.2 527.4 649.1 531.0 650.0 533.6 C650.9 536.2 650.8 540.3 650.0 542.5 C649.2 544.7 646.4 544.2 645.5 546.9 C644.6 549.6 644.8 553.6 644.8 558.8 C644.8 564.0 645.8 574.0 645.5 578.0 C645.2 582.0 645.8 585.0 643.3 582.5 C640.8 580.0 633.8 569.9 630.7 563.2 C627.6 556.5 626.0 547.9 624.8 542.5 C623.6 537.1 620.0 533.3 623.3 530.7 Z" fill="#0f28ac" />
<path d="M803.3 504.4 C806.1 503.3 819.8 508.9 823.3 511.1 C826.8 513.3 824.8 514.8 824.4 517.8 C824.0 520.8 822.2 525.6 821.1 528.9 C820.0 532.2 820.2 535.0 817.8 537.8 C815.4 540.6 809.1 544.9 806.7 545.6 C804.3 546.3 803.1 544.2 803.3 542.2 C803.5 540.2 807.2 537.4 807.8 533.3 C808.4 529.2 807.5 522.6 806.7 517.8 C806.0 513.0 800.5 505.5 803.3 504.4 Z" fill="#0e26a6" />
<path d="M684 382 Q676 415 680 449" fill="none" stroke="#061055" stroke-width="1.6" stroke-opacity="0.55"/><path d="M770 376 Q790 410 784 450" fill="none" stroke="#061055" stroke-width="1.6" stroke-opacity="0.5"/>
<path d="M638.5 452.5 C641.0 450.9 647.1 450.2 652.0 449.5 C656.9 448.8 665.1 447.2 668.0 448.5 C670.9 449.8 670.2 454.4 669.5 457.0 C668.8 459.6 667.2 463.2 664.0 464.0 C660.8 464.8 654.5 462.8 650.0 462.0 C645.5 461.2 638.9 460.6 637.0 459.0 C635.1 457.4 636.0 454.1 638.5 452.5 Z" fill="#050510" />
<path d="M789.5 450.0 C791.3 448.5 797.9 452.0 803.0 452.0 C808.1 452.0 816.7 448.8 820.0 450.0 C823.3 451.2 823.3 456.5 823.0 459.0 C822.7 461.5 820.8 464.3 818.0 465.0 C815.2 465.7 810.3 463.7 806.0 463.0 C801.7 462.3 794.8 463.2 792.0 461.0 C789.2 458.8 787.7 451.5 789.5 450.0 Z" fill="#050510" />
<path d="M625.0 525.0 C628.1 523.8 641.6 524.3 644.5 525.5 C647.4 526.7 645.6 530.8 642.5 532.0 C639.4 533.2 628.9 533.7 626.0 532.5 C623.1 531.3 621.9 526.2 625.0 525.0 Z" fill="#050510" />
<path d="M806.5 510.5 C809.2 510.0 820.7 510.8 823.5 511.5 C826.3 512.2 826.2 514.5 823.5 515.0 C820.8 515.5 809.8 515.2 807.0 514.5 C804.2 513.8 803.8 511.0 806.5 510.5 Z" fill="#050510" />
<path d="M679 449 Q730 436 784 451" fill="none" stroke="#05061a" stroke-width="3.2"/>
<path d="M683.3 506.7 C686.8 504.9 683.9 508.9 697.8 509.4 C711.7 509.8 754.3 508.9 766.7 509.4 C779.1 509.9 770.7 509.5 772.2 512.2 C773.7 514.9 775.2 521.9 775.6 525.6 C776.0 529.3 777.0 530.0 774.4 534.4 C771.8 538.8 766.9 546.3 760.0 552.2 C753.1 558.1 739.6 566.3 733.3 570.0 C727.0 573.7 727.0 574.0 722.2 574.4 C717.4 574.8 711.1 574.8 704.4 572.2 C697.7 569.6 687.2 564.3 682.2 558.9 C677.2 553.5 675.3 546.5 674.4 540.0 C673.5 533.5 675.2 525.5 676.7 520.0 C678.2 514.5 679.8 508.5 683.3 506.7 Z" fill="url(#gPel)" />
<path d="M668.3 540.0 C669.7 538.7 670.9 546.2 676.0 552.0 C681.1 557.8 693.6 570.7 698.9 575.0 C704.2 579.3 704.3 578.0 707.8 578.0 C711.3 578.0 717.4 576.3 720.0 575.0 C722.6 573.7 722.6 564.2 723.3 570.0 C723.9 575.8 724.1 598.9 723.9 610.0 C723.7 621.1 722.9 631.5 722.2 636.7 C721.6 641.9 725.2 640.0 720.0 641.0 C714.8 642.0 697.4 647.0 691.1 643.0 C684.8 639.0 685.0 623.9 682.2 616.7 C679.4 609.5 676.2 604.5 674.4 600.0 C672.5 595.5 672.2 596.7 671.1 590.0 C670.0 583.3 668.3 568.3 667.8 560.0 C667.3 551.7 666.9 541.3 668.3 540.0 Z" fill="url(#gLeg)" />
<path d="M728.5 574.0 C731.3 570.3 739.2 572.0 745.0 568.0 C750.8 564.0 757.9 555.8 763.0 550.0 C768.1 544.2 773.1 534.7 775.6 533.0 C778.1 531.3 776.9 536.0 777.8 540.0 C778.7 544.0 780.4 550.2 781.1 556.7 C781.8 563.2 782.0 570.0 782.2 578.9 C782.4 587.8 782.9 600.9 782.2 610.0 C781.5 619.1 779.5 623.3 777.8 633.3 C776.1 643.3 778.1 663.0 772.2 670.0 C766.3 677.0 748.3 680.2 742.2 675.0 C736.1 669.8 737.5 651.4 735.6 638.9 C733.7 626.4 731.8 608.1 730.6 600.0 C729.4 591.9 728.6 594.3 728.3 590.0 C727.9 585.7 725.7 577.7 728.5 574.0 Z" fill="url(#gLegR)" />
<path d="M671.5 531.0 C672.8 531.2 673.9 536.8 676.0 541.0 C678.1 545.2 679.3 551.2 684.0 556.0 C688.7 560.8 698.0 567.2 704.4 570.0 C710.8 572.8 719.7 571.0 722.5 573.0 C725.3 575.0 723.1 579.3 721.0 582.0 C718.9 584.7 713.7 588.0 710.0 589.0 C706.3 590.0 704.7 591.8 699.0 588.0 C693.3 584.2 681.1 572.0 676.0 566.0 C670.9 560.0 669.8 556.3 668.5 552.0 C667.2 547.7 667.5 543.5 668.0 540.0 C668.5 536.5 670.2 530.8 671.5 531.0 Z" fill="#050510" />
<path d="M775.0 531.0 C777.1 530.3 777.7 536.8 776.5 541.0 C775.3 545.2 772.1 550.8 768.0 556.0 C763.9 561.2 756.7 567.3 752.0 572.0 C747.3 576.7 743.5 581.5 740.0 584.0 C736.5 586.5 732.9 587.8 731.0 587.0 C729.1 586.2 728.2 582.0 728.5 579.0 C728.8 576.0 729.1 572.8 733.0 569.0 C736.9 565.2 746.8 560.0 752.0 556.0 C757.2 552.0 760.2 549.2 764.0 545.0 C767.8 540.8 772.9 531.7 775.0 531.0 Z" fill="#050510" />
<path d="M687.8 503.3 C690.6 501.6 691.6 498.5 704.4 497.8 C717.2 497.1 753.8 496.9 764.4 498.9 C775.0 500.9 778.9 508.3 767.8 510.0 C756.7 511.7 711.1 509.3 697.8 508.9 C684.5 508.5 689.5 508.7 687.8 507.8 C686.1 506.9 685.0 505.0 687.8 503.3 Z" fill="#050510" />
<path d="M693.3 657.8 C698.7 655.2 715.7 653.4 721.1 656.7 C726.5 660.0 725.0 670.6 725.6 677.8 C726.2 685.0 725.2 694.6 725.0 700.0 C724.8 705.4 725.3 704.4 724.3 710.0 C723.3 715.6 720.0 725.7 718.8 733.6 C717.6 741.5 717.5 750.9 717.2 757.2 C716.9 763.5 720.5 769.3 717.2 771.4 C713.9 773.5 700.6 772.2 697.5 769.8 C694.4 767.4 698.7 764.0 698.3 757.2 C697.9 750.4 696.5 736.8 695.2 728.9 C693.9 721.0 691.5 716.5 690.5 710.0 C689.5 703.5 689.2 696.3 688.9 690.0 C688.6 683.7 688.2 677.6 688.9 672.2 C689.6 666.8 687.9 660.4 693.3 657.8 Z" fill="url(#gShin)" />
<path d="M742.2 684.4 C748.5 682.0 766.3 681.6 771.1 683.3 C775.9 685.0 770.8 689.1 771.1 694.4 C771.4 699.7 773.9 707.1 772.8 715.0 C771.7 722.9 766.4 733.1 764.4 741.5 C762.4 749.9 761.5 755.4 760.5 765.1 C759.5 774.8 762.4 794.2 758.1 799.7 C753.8 805.2 738.2 803.9 734.5 798.1 C730.8 792.3 736.6 774.5 736.1 765.1 C735.6 755.7 732.3 749.9 731.4 741.5 C730.5 733.1 730.3 722.3 730.6 715.0 C730.9 707.7 731.4 702.9 733.3 697.8 C735.2 692.7 735.9 686.8 742.2 684.4 Z" fill="url(#gShin)" />
<path d="M691.5 645.0 C693.8 643.7 701.1 643.8 706.0 643.0 C710.9 642.2 717.9 639.5 721.0 640.0 C724.1 640.5 724.2 643.8 724.4 646.0 C724.6 648.2 723.1 650.8 722.2 653.0 C721.3 655.2 723.3 658.1 718.9 659.0 C714.5 659.9 700.0 659.8 695.6 658.5 C691.2 657.2 692.9 653.2 692.2 651.0 C691.5 648.8 689.2 646.3 691.5 645.0 Z" fill="#050510" />
<path d="M740.0 675.6 C745.0 673.4 766.5 670.4 772.2 671.1 C777.9 671.8 774.4 677.2 774.4 680.0 C774.4 682.8 777.6 687.1 772.2 687.8 C766.8 688.5 747.6 686.4 742.2 684.4 C736.8 682.4 735.0 677.8 740.0 675.6 Z" fill="#050510" />
<path d="M679.4 769.8 C680.3 767.7 681.8 763.6 684.2 761.9 C686.6 760.2 691.2 759.9 693.6 759.6 C696.0 759.4 694.6 757.1 698.3 760.4 C702.0 763.7 712.6 774.0 715.6 779.2 C718.6 784.4 716.9 788.2 716.4 791.8 C715.9 795.3 714.5 798.9 712.5 800.5 C710.5 802.1 708.0 802.8 704.6 801.3 C701.2 799.8 695.7 795.2 692.0 791.8 C688.3 788.4 684.8 783.7 682.6 780.8 C680.4 777.9 679.2 776.3 678.7 774.5 C678.2 772.7 678.5 771.9 679.4 769.8 Z" fill="#0e28ac" />
<path d="M697.0 768.5 C699.7 768.1 713.8 770.8 717.0 772.0 C720.2 773.2 719.2 775.1 716.5 775.5 C713.8 775.9 704.2 775.7 701.0 774.5 C697.8 773.3 694.3 768.9 697.0 768.5 Z" fill="#050510" />
<path d="M729.5 811.0 C730.0 807.4 731.9 803.5 735.0 801.5 C738.1 799.5 744.3 799.2 748.0 799.0 C751.7 798.8 753.7 796.2 757.0 800.5 C760.3 804.8 763.6 816.5 768.0 825.0 C772.4 833.5 780.0 846.3 783.3 851.6 C786.6 856.9 787.3 854.6 788.0 857.0 C788.7 859.4 791.8 863.8 787.5 866.0 C783.2 868.2 767.0 870.0 762.0 870.0 C757.0 870.0 760.8 871.3 757.5 866.0 C754.2 860.7 746.2 845.2 742.0 838.0 C737.8 830.8 734.1 827.5 732.0 823.0 C729.9 818.5 729.0 814.6 729.5 811.0 Z" fill="#0d26a4" />
<path d="M728.9 271.1 C734.0 271.2 740.5 272.2 744.4 274.4 C748.3 276.6 750.5 280.3 752.2 284.4 C753.9 288.5 754.2 293.7 754.4 298.9 C754.6 304.1 754.2 310.1 753.3 315.6 C752.4 321.2 750.0 327.8 748.9 332.2 C747.8 336.6 752.6 340.3 746.7 342.2 C740.8 344.1 720.0 345.5 713.3 343.3 C706.6 341.1 708.7 333.9 706.7 328.9 C704.7 323.9 702.1 318.7 701.1 313.3 C700.1 307.9 700.1 301.9 700.6 296.7 C701.1 291.5 702.2 286.0 704.4 282.2 C706.6 278.4 709.9 275.9 714.0 274.0 C718.1 272.1 723.8 271.0 728.9 271.1 Z" fill="url(#gHead)" stroke="#1d3ad0" stroke-width="1.4" stroke-opacity="0.6"/>
<path d="M714.5 332.5 C717.2 330.0 725.1 330.6 730.0 330.5 C734.9 330.4 741.4 329.6 744.0 332.0 C746.6 334.4 747.8 342.6 745.5 345.0 C743.2 347.4 735.3 346.4 730.0 346.5 C724.7 346.6 716.1 347.8 713.5 345.5 C710.9 343.2 711.8 335.0 714.5 332.5 Z" fill="#050510" />
<path d="M672.2 358.9 C673.7 357.2 678.1 356.7 682.2 356.7 C686.3 356.7 693.4 357.2 696.7 358.9 C700.0 360.6 701.5 364.1 702.2 366.7 C702.9 369.3 702.6 372.2 701.1 374.4 C699.6 376.6 696.8 379.1 693.3 380.0 C689.8 380.9 683.3 382.2 680.0 380.0 C676.7 377.8 674.6 370.2 673.3 366.7 C672.0 363.2 670.7 360.6 672.2 358.9 Z" fill="#050510" />
<path d="M770.0 353.3 C773.0 352.6 778.5 353.5 782.2 353.9 C785.9 354.3 792.2 351.6 792.2 355.6 C792.2 359.6 785.7 374.5 782.2 377.8 C778.7 381.1 774.2 377.5 771.1 375.6 C768.0 373.8 764.4 369.7 763.3 366.7 C762.2 363.7 763.3 360.0 764.4 357.8 C765.5 355.6 767.0 354.0 770.0 353.3 Z" fill="#050510" />
<rect x="722.6" y="391.5" width="18.5" height="3.3" fill="#05061a"/><circle cx="723.3" cy="400.7" r="4" fill="#05061a"/><circle cx="739.3" cy="400.7" r="4" fill="#05061a"/>
<ellipse cx="731" cy="274.5" rx="7" ry="3.2" fill="#3050e8" opacity="0.8"/><ellipse cx="731" cy="274.3" rx="5" ry="2.2" fill="#e8f0ff" opacity="0.95"/><ellipse cx="775.6" cy="354.6" rx="3.5" ry="1.6" fill="#dddddd" opacity="0.9"/><ellipse cx="821.5" cy="457" rx="0.9" ry="2.8" fill="#8fa4ff" opacity="0.6"/>
</svg>
<div class="vbtn" style="top:48px;background:#3a3a3b">ROT</div>
<div class="vbtn" style="top:92px;background:#18181b">SKEL</div>
<div id="panel" class="abs"></div>
<div id="pstrip" class="abs"></div>
<div id="settings" class="btn">Settings</div>
<div id="ptitle" class="abs">Locomotion Animset</div>
<div id="psub" class="abs">Create the open world you have always ...</div>
<div id="xc" class="abs">X</div>
<div id="export" class="btn">Export Locomotion Animset</div>
<div id="list" class="abs">
<div class="item" style="top:-33.5px">start walk r 135</div>
<div class="item" style="top:41.94px">start walk r 180</div>
<div class="item" style="top:117.38px">start walk r 90</div>
<div class="item" style="top:192.82px">stop cliffedge l</div>
<div class="item" style="top:268.26px">stop cliffedge r</div>
<div class="item" style="top:343.70px">stop jog l</div>
<div class="item" style="top:419.14px">stop jog l immediate</div>
<div class="item" style="top:494.58px">stop jog r</div>
<div class="item" style="top:570.02px">stop jog r immediate</div>
<div class="item" style="top:645.46px">stop sprint l</div>
<div class="item" style="top:720.90px">stop sprint l immediate</div>
<div class="item" style="top:796.34px"></div>
</div>
<div class="abs" style="left:1476px;top:242px;width:3px;height:815px;background:#2f2f2f"></div>
<div id="track" class="abs"></div>
<div id="thumb" class="abs"></div>
<svg class="abs" style="left:1876px;top:242px" width="19" height="815" viewBox="1876 242 19 815">
<path d="M1881.3 254 L1885.7 249.5 L1890.1 254" fill="none" stroke="#6a6a6a" stroke-width="1.3"/>
<path d="M1881 1046.5 L1885.6 1051 L1890.2 1046.5" fill="none" stroke="#6a6a6a" stroke-width="1.3"/>
</svg>
<div id="tl" class="abs"></div>
<div id="tlc" class="abs"></div>
<div id="ph" class="abs"></div>
<div id="bline" class="abs"></div><div id="bline2" class="abs"></div>
<svg class="abs" style="left:1300px;top:1045px" width="150" height="32" viewBox="1300 1045 150 32">
<g fill="none" stroke="#f4f4f4" stroke-width="2.3" stroke-linecap="butt" stroke-linejoin="miter">
<path d="M1319 1058 L1312 1061.5 L1319 1065"/><path d="M1321.2 1054.5 L1321.2 1069"/>
<path d="M1350.5 1058 L1343.5 1061.5 L1350.5 1065"/>
<path d="M1372 1058 L1379 1061.5 L1372 1065"/>
<path d="M1400.5 1058 L1407.5 1061.5 L1400.5 1065"/>
<path d="M1429.6 1054.5 L1429.6 1069"/><path d="M1432 1058 L1439 1061.5 L1432 1065"/>
</g></svg>
</body></html>
